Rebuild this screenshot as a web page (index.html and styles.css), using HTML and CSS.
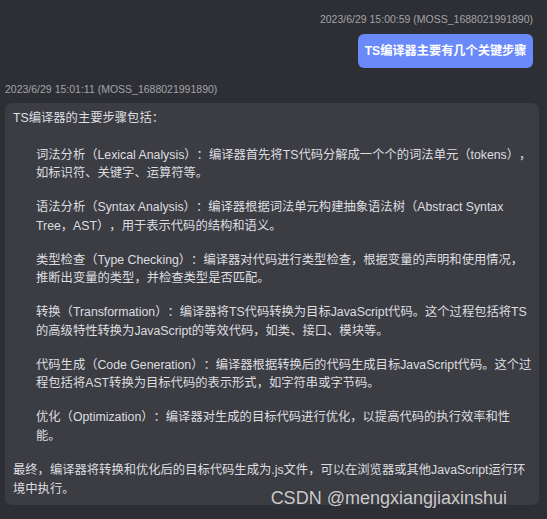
FILE: index.html
```html
<!DOCTYPE html>
<html lang="zh-CN">
<head>
<meta charset="utf-8">
<title>MOSS</title>
<link rel="stylesheet" href="styles.css">
</head>
<body>
<div class="chat">
  <div class="msg msg-user">
    <div class="meta">2023/6/29 15:00:59 (MOSS_1688021991890)</div>
    <div class="bubble bubble-user">TS编译器主要有几个关键步骤</div>
  </div>
  <div class="msg msg-bot">
    <div class="meta">2023/6/29 15:01:11 (MOSS_1688021991890)</div>
    <div class="bubble bubble-bot">
      <p>TS编译器的主要步骤包括：</p>
      <ul class="steps">
        <li>词法分析（Lexical Analysis）：编译器首先将TS代码分解成一个个的词法单元（tokens），如标识符、关键字、运算符等。</li>
        <li>语法分析（Syntax Analysis）：编译器根据词法单元构建抽象语法树（Abstract Syntax Tree，AST），用于表示代码的结构和语义。</li>
        <li>类型检查（Type Checking）：编译器对代码进行类型检查，根据变量的声明和使用情况，推断出变量的类型，并检查类型是否匹配。</li>
        <li>转换（Transformation）：编译器将TS代码转换为目标JavaScript代码。这个过程包括将TS的高级特性转换为JavaScript的等效代码，如类、接口、模块等。</li>
        <li>代码生成（Code Generation）：编译器根据转换后的代码生成目标JavaScript代码。这个过程包括将AST转换为目标代码的表示形式，如字符串或字节码。</li>
        <li>优化（Optimization）：编译器对生成的目标代码进行优化，以提高代码的执行效率和性能。</li>
      </ul>
      <p class="final">最终，编译器将转换和优化后的目标代码生成为.js文件，可以在浏览器或其他JavaScript运行环境中执行。</p>
    </div>
  </div>
</div>
<div class="watermark">CSDN @mengxiangjiaxinshui</div>
</body>
</html>
```

FILE: styles.css
```css
html, body {
  margin: 0;
  padding: 0;
}

body {
  background: #2e2f34;
  width: 547px;
  height: 519px;
  overflow: hidden;
  position: relative;
  font-family: "Liberation Sans", "Noto Sans CJK SC", sans-serif;
  color: #dcdcde;
  text-spacing-trim: space-all;
}

.chat {
  display: flex;
  flex-direction: column;
  padding: 12px 8px 0 5px;
}

.msg {
  display: flex;
  flex-direction: column;
}

.msg-user {
  align-items: flex-end;
  padding-right: 6px;
}

.msg-bot {
  align-items: stretch;
  margin-top: 14px;
}

.meta {
  font-size: 10.5px;
  line-height: 14px;
  color: #a2a3a8;
}

.bubble {
  font-size: 12.3px;
  line-height: 18.6px;
}

.bubble-user {
  margin-top: 8px;
  background: #6a8afc;
  color: #ffffff;
  font-weight: bold;
  font-size: 12.2px;
  padding: 7.7px 6.5px;
  border-radius: 6px;
}

.bubble-bot {
  margin-top: 7px;
  background: #3c3d42;
  border-radius: 7px;
  padding: 6px 6px 7px 8px;
  color: #dddde0;
}

.bubble-bot p {
  margin: 0;
}

.steps {
  list-style: none;
  margin: 18px 0 0 0;
  padding: 0 0 0 23px;
}

.steps li + li {
  margin-top: 15.4px;
}

.bubble-bot .final {
  margin-top: 15.5px;
}

.watermark {
  position: absolute;
  right: 40px;
  top: 487px;
  font-size: 18px;
  line-height: 22px;
  color: rgba(235, 235, 235, 0.85);
  text-shadow: 0 0 1px rgba(0, 0, 0, 0.4);
  font-family: "Liberation Sans", sans-serif;
}
```
